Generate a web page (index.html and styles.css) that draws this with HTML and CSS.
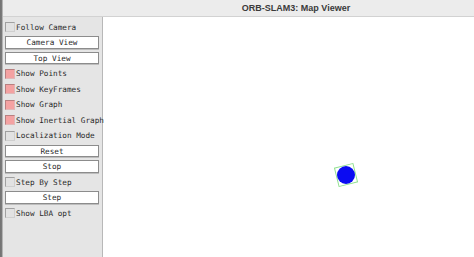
FILE: index.html
```html
<!DOCTYPE html>
<html>
<head>
<meta charset="utf-8">
<link rel="stylesheet" href="styles.css">
</head>
<body>
<div class="window">
  <div class="edge"></div>
  <div class="main">
    <div class="titlebar"><span class="title">ORB-SLAM3: Map Viewer</span></div>
    <div class="content">
      <div class="panel">
        <div class="row"><span class="box"></span><span class="lbl">Follow Camera</span></div>
        <div class="row"><span class="btn">Camera View</span></div>
        <div class="row"><span class="btn">Top View</span></div>
        <div class="row"><span class="box on"></span><span class="lbl">Show Points</span></div>
        <div class="row"><span class="box on"></span><span class="lbl">Show KeyFrames</span></div>
        <div class="row"><span class="box on"></span><span class="lbl">Show Graph</span></div>
        <div class="row"><span class="box on"></span><span class="lbl">Show Inertial Graph</span></div>
        <div class="row"><span class="box"></span><span class="lbl">Localization Mode</span></div>
        <div class="row"><span class="btn">Reset</span></div>
        <div class="row"><span class="btn">Stop</span></div>
        <div class="row"><span class="box"></span><span class="lbl">Step By Step</span></div>
        <div class="row"><span class="btn">Step</span></div>
        <div class="row"><span class="box"></span><span class="lbl">Show LBA opt</span></div>
      </div>
      <div class="canvas">
        <svg class="cam" width="30" height="30" viewBox="0 0 30 30">
          <rect x="5.5" y="5.5" width="19" height="19" fill="none" stroke="#8fe08f" stroke-width="1" transform="rotate(-14 15 15)"/>
          <circle cx="15" cy="15" r="9" fill="#0b0bf2"/>
        </svg>
      </div>
    </div>
  </div>
</div>
</body>
</html>
```
FILE: styles.css
```css
html, body {
  margin: 0;
  padding: 0;
  width: 474px;
  height: 257px;
  overflow: hidden;
  background: #ffffff;
}
.window {
  display: flex;
  width: 474px;
  height: 257px;
}
.edge {
  width: 3px;
  flex: none;
  background: linear-gradient(to right, #727272 0, #7c7c7c 2px, #b4b4b4 2px);
}
.main {
  flex: 1;
  display: flex;
  flex-direction: column;
}
.titlebar {
  height: 16px;
  flex: none;
  background: #ececec;
  border-bottom: 1px solid #d2d2d2;
  display: flex;
  align-items: center;
  justify-content: center;
  padding-left: 115px;
}
.title {
  font-family: "Liberation Sans", sans-serif;
  font-weight: bold;
  font-size: 9px;
  color: #3a3a3a;
}
.content {
  flex: 1;
  display: flex;
}
.panel {
  width: 99px;
  flex: none;
  background: #e5e5e5;
  border-right: 1px solid #b8b8b8;
  padding-top: 2.3px;
  display: grid;
  grid-auto-rows: 15.5px;
  align-content: start;
  font-family: "DejaVu Sans Mono", monospace;
  font-size: 7.7px;
  color: #2a2a2a;
  position: relative;
  z-index: 1;
}
.row {
  display: flex;
  align-items: center;
  padding-left: 2px;
}
.box {
  width: 10px;
  height: 10px;
  box-sizing: border-box;
  border: 1px solid #a0a0a0;
  border-right-color: #cfcfcf;
  border-bottom-color: #cfcfcf;
  background: #e2e2e2;
  flex: none;
}
.box.on {
  background: #f4a2a2;
  border-color: #b88080;
  border-right-color: #e0b8b8;
  border-bottom-color: #e0b8b8;
}
.lbl {
  margin-left: 1px;
  white-space: nowrap;
}
.btn {
  width: 94px;
  height: 12.5px;
  box-sizing: border-box;
  border: 1px solid #8c8c8c;
  background: #ffffff;
  box-shadow: 0 1px 0 #bdbdbd;
  display: flex;
  align-items: center;
  justify-content: center;
}
.canvas {
  flex: 1;
  background: #ffffff;
  position: relative;
}
.cam {
  position: absolute;
  left: 228px;
  top: 143px;
}
```
